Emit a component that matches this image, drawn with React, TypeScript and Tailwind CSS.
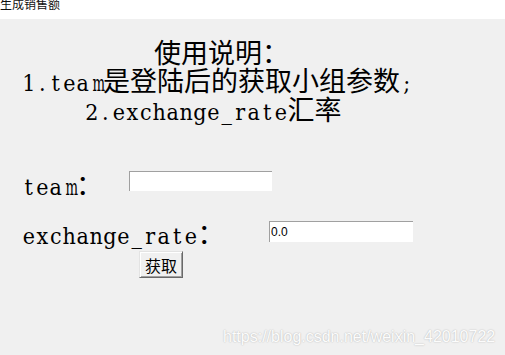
import React from "react";

// SimSun-like half-width Latin: every char sits in a fixed 13.5px cell
const Mono = ({ text }: { text: string }) => (
  <>
    {text.split("").map((ch, i) => (
      <span
        key={i}
        className={
          ch === "m"
            ? "inline-block w-[13.5px] scale-x-[0.64] text-center font-['DejaVu_Serif_Condensed','DejaVu_Serif',serif] text-[23px]"
            : "inline-block w-[13.5px] text-center font-['DejaVu_Serif_Condensed','DejaVu_Serif',serif] text-[23px]"
        }
      >
        {ch}
      </span>
    ))}
  </>
);

const App = () => {
  return (
    <div className="relative flex h-[355px] w-[505px] flex-col overflow-hidden bg-[#f0f0f0] font-['Liberation_Serif','Noto_Sans_CJK_SC',serif] text-black">
      {/* window title */}
      <div className="h-[19px] shrink-0 overflow-hidden bg-white">
        <div className="-mt-[2px] font-['Noto_Sans_CJK_SC',sans-serif] text-[12px] leading-[12px] text-[#111]">
          生成销售额
        </div>
      </div>

      {/* usage text */}
      <div className="mt-[21px] text-[27px] leading-[28px]">
        <div className="pl-[154px]">使用说明：</div>
        <div className="pl-[22px] whitespace-nowrap">
          <Mono text="1.team" />是登陆后的获取小组参数<Mono text=";" />
        </div>
        <div className="pl-[85px] whitespace-nowrap">
          <Mono text="2.exchange_rate" />汇率
        </div>
      </div>

      {/* team */}
      <div className="mt-[45px] flex h-[50px] items-start pl-[22px]">
        <div className="mt-[1px] w-[107px] text-[27px] leading-[28px] whitespace-nowrap">
          <Mono text="team" />：
        </div>
        <input
          className="h-[20px] w-[143px] border-l border-t border-[#a0a0a0] bg-white px-[2px] font-['Liberation_Sans',sans-serif] text-[12px] outline-none"
          defaultValue=""
        />
      </div>

      {/* exchange rate */}
      <div className="flex h-[30px] items-start pl-[22px]">
        <div className="w-[247px] text-[27px] leading-[28px] whitespace-nowrap">
          <Mono text="exchange_rate" />：
        </div>
        <input
          className="h-[21px] w-[144px] border-l border-t border-[#a0a0a0] bg-white px-[1px] font-['Liberation_Sans',sans-serif] text-[12px] outline-none"
          defaultValue="0.0"
        />
      </div>

      <div className="pl-[139px]">
        <button className="flex h-[27px] w-[44px] items-center justify-center border border-b-[#696969] border-l-[#e3e3e3] border-r-[#696969] border-t-[#e3e3e3] bg-[#f0f0f0] font-['Noto_Sans_CJK_SC',sans-serif] text-[16px] leading-none shadow-[inset_1px_1px_0_#fff,inset_-1px_-1px_0_#a0a0a0]">
          获取
        </button>
      </div>

      {/* watermark */}
      <div className="absolute left-[223px] top-[329px] whitespace-nowrap font-['Liberation_Sans',sans-serif] text-[16px] leading-[16px] text-[#fcfcfc] [text-shadow:0_0_1.5px_rgba(0,0,0,0.3)]">
        https://blog.csdn.net/weixin_42010722
      </div>
    </div>
  );
};

export default App;
